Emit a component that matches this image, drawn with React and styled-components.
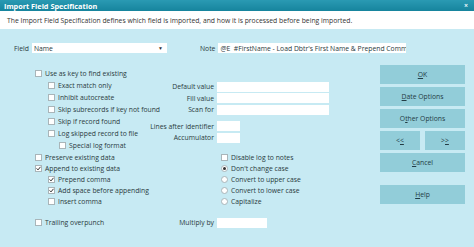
import React from "react";
import styled, { createGlobalStyle } from "styled-components";

const Global = createGlobalStyle`
  html, body { margin: 0; padding: 0; }
  body {
    width: 474px; height: 247px; overflow: hidden;
    font-family: "Open Sans", "Noto Sans", sans-serif;
    font-size: 6.8px; color: #2a3a40;
    background: #c7eaf3;
  }
`;

const Window = styled.div`
  width: 474px; height: 247px;
  display: flex; flex-direction: column;
  background: #c7eaf3;
`;

const TitleBar = styled.div`
  height: 11px;
  background: linear-gradient(#2a9ab3, #16849d);
  color: #fff; font-weight: 700; font-size: 7.3px;
  display: flex; align-items: center; justify-content: space-between;
  padding: 0 6px 0 4px;
`;

const Close = styled.span`
  font-size: 7px; line-height: 1; color: #e8f6fa;
`;

const Description = styled.div`
  height: 18px; background: #fff;
  display: flex; align-items: center;
  padding-left: 7px; color: #333;
`;

const Body = styled.div`
  flex: 1;
  padding: 14px 0 0 14px;
  display: flex; flex-direction: column;
`;

const FieldRow = styled.div`
  display: flex; align-items: center; height: 10px;
`;

const Label = styled.span`
  white-space: nowrap;
  width: ${p => p.$w ? p.$w + "px" : "auto"};
  text-align: ${p => p.$right ? "right" : "left"};
  padding-right: ${p => p.$right ? "3px" : "0"};
  margin-left: ${p => p.$ml || 0}px;
  flex-shrink: 0;
`;

const Select = styled.div`
  width: 135px; height: 10px; background: #fff;
  margin-left: 3px; display: flex; align-items: center; justify-content: space-between;
  padding: 0 4px 0 2px; box-sizing: border-box;
`;

const Arrow = styled.span`
  font-size: 5px; color: #333;
`;

const TextInput = styled.div`
  width: ${p => p.$w}px; height: ${p => p.$h || 10}px; background: #fff;
  box-sizing: border-box; padding-left: 2px; overflow: hidden; white-space: nowrap;
  display: flex; align-items: center; flex-shrink: 0;
  margin-left: ${p => p.$ml || 0}px;
`;

const Content = styled.div`
  display: flex; margin-top: 12px;
`;

const Left = styled.div`
  width: 366px; display: flex; flex-direction: column;
`;

const Top = styled.div`
  display: flex; height: 87px;
`;

const CheckCol = styled.div`
  width: 115px; display: flex; flex-direction: column; padding-top: 2px;
  margin-left: 21px;
`;

const Row = styled.div`
  display: flex; align-items: center; height: ${p => p.$h || 12}px;
  padding-left: ${p => p.$indent || 0}px; white-space: nowrap;
`;

const Box = styled.span`
  width: 5px; height: 5px; border: 1px solid #a9b5b9; background: #fff;
  margin-right: 3px; display: inline-flex; align-items: center; justify-content: center;
  border-radius: ${p => p.$round ? "50%" : "0"}; flex-shrink: 0;
`;

const Tick = styled.svg`
  width: 5px; height: 5px;
`;

const Dot = styled.span`
  width: 3px; height: 3px; border-radius: 50%; background: #333;
`;

const ValueCol = styled.div`
  display: flex; flex-direction: column; padding-top: 16px;
`;

const ValueRow = styled.div`
  display: flex; align-items: center; height: 11.5px;
  margin-top: ${p => p.$mt || 0}px;
`;

const Bottom = styled.div`
  display: flex;
`;

const BottomLeft = styled.div`
  width: 186px; margin-left: 21px; display: flex; flex-direction: column;
`;

const BottomRight = styled.div`
  display: flex; flex-direction: column;
`;

const LastRow = styled.div`
  display: flex; align-items: center; height: 11px;
  margin: 10px 0 0 21px;
`;

const OptionCell = styled.div`
  width: 115px;
`;

const Buttons = styled.div`
  width: 85px; display: flex; flex-direction: column; gap: 3.5px;
`;

const Btn = styled.div`
  height: 18.5px; background: #92cdd9; color: #233c45;
  display: flex; align-items: center; justify-content: center;
  flex: ${p => p.$half ? 1 : "none"};
  margin-top: ${p => p.$mt || 0}px;
  u { text-decoration: underline; }
`;

const BtnPair = styled.div`
  display: flex; gap: 5px;
`;

function Check({ checked, radio, children, indent, h }) {
  return (
    <Row $indent={indent} $h={h}>
      <Box $round={radio}>
        {checked && !radio && (
          <Tick viewBox="0 0 5 5">
            <path d="M0.6 2.4 L2 3.9 L4.5 0.8" stroke="#333" strokeWidth="1" fill="none" />
          </Tick>
        )}
        {checked && radio && <Dot />}
      </Box>
      {children}
    </Row>
  );
}

export default function App() {
  return (
    <Window>
      <Global />
      <TitleBar>
        <span>Import Field Specification</span>
        <Close>×</Close>
      </TitleBar>
      <Description>
        The Import Field Specification defines which field is imported, and how it is processed before being imported.
      </Description>
      <Body>
        <FieldRow>
          <Label>Field</Label>
          <Select>
            <span>Name</span>
            <Arrow>▼</Arrow>
          </Select>
          <Label $ml={33}>Note</Label>
          <TextInput $w={188} $ml={3}>
            @E&nbsp;&nbsp;#FirstName - Load Dbtr's First Name &amp; Prepend Comma
          </TextInput>
        </FieldRow>
        <Content>
          <Left>
            <Top>
              <CheckCol>
                <Check>Use as key to find existing</Check>
                <Check indent={13}>Exact match only</Check>
                <Check indent={13}>Inhibit autocreate</Check>
                <Check indent={13}>Skip subrecords if key not found</Check>
                <Check indent={13}>Skip if record found</Check>
                <Check indent={13}>Log skipped record to file</Check>
                <Check indent={24}>Special log format</Check>
              </CheckCol>
              <ValueCol>
                <ValueRow>
                  <Label $w={64} $right>Default value</Label>
                  <TextInput $w={112} />
                </ValueRow>
                <ValueRow>
                  <Label $w={64} $right>Fill value</Label>
                  <TextInput $w={112} />
                </ValueRow>
                <ValueRow>
                  <Label $w={64} $right>Scan for</Label>
                  <TextInput $w={112} />
                </ValueRow>
                <ValueRow $mt={5}>
                  <Label $w={64} $right>Lines after identifier</Label>
                  <TextInput $w={23} />
                </ValueRow>
                <ValueRow>
                  <Label $w={64} $right>Accumulator</Label>
                  <TextInput $w={23} />
                </ValueRow>
              </ValueCol>
            </Top>
            <Bottom>
              <BottomLeft>
                <Check h={11}>Preserve existing data</Check>
                <Check h={11} checked>Append to existing data</Check>
                <Check h={11} indent={13} checked>Prepend comma</Check>
                <Check h={11} indent={13} checked>Add space before appending</Check>
                <Check h={11} indent={13}>Insert comma</Check>
              </BottomLeft>
              <BottomRight>
                <Check h={11}>Disable log to notes</Check>
                <Check h={11} radio checked>Don't change case</Check>
                <Check h={11} radio>Convert to upper case</Check>
                <Check h={11} radio>Convert to lower case</Check>
                <Check h={11} radio>Capitalize</Check>
              </BottomRight>
            </Bottom>
            <LastRow>
              <OptionCell>
                <Check h={11}>Trailing overpunch</Check>
              </OptionCell>
              <Label $w={64} $right>Multiply by</Label>
              <TextInput $w={50} />
            </LastRow>
          </Left>
          <Buttons>
            <Btn><u>O</u>K</Btn>
            <Btn><u>D</u>ate Options</Btn>
            <Btn>O<u>t</u>her Options</Btn>
            <BtnPair>
              <Btn $half>&lt;<u>&lt;</u></Btn>
              <Btn $half>&gt;<u>&gt;</u></Btn>
            </BtnPair>
            <Btn><u>C</u>ancel</Btn>
            <Btn $mt={10}><u>H</u>elp</Btn>
          </Buttons>
        </Content>
      </Body>
    </Window>
  );
}
